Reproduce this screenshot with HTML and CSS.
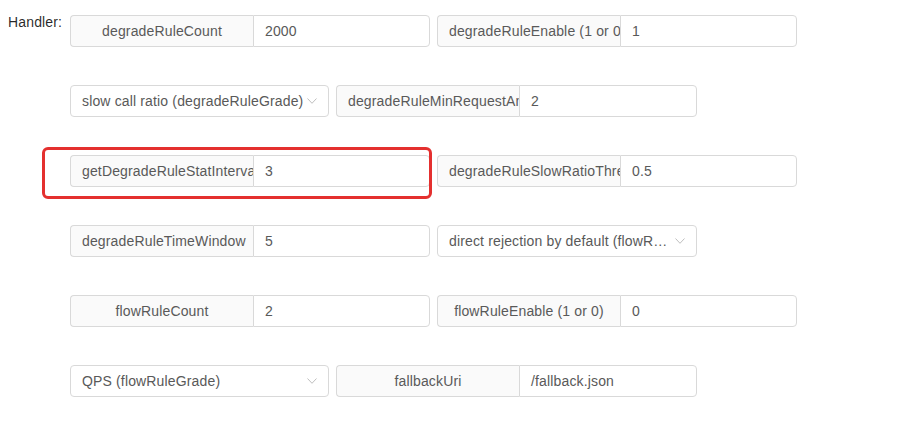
FILE: index.html
```html
<!DOCTYPE html>
<html>
<head>
<meta charset="utf-8">
<link rel="stylesheet" href="styles.css">
</head>
<body>
<div class="form">
  <div class="label">Handler:</div>
  <div class="rows">
    <div class="row">
      <div class="group"><div class="addon">degradeRuleCount</div><div class="input">2000</div></div>
      <div class="group"><div class="addon">degradeRuleEnable (1 or 0)</div><div class="input">1</div></div>
    </div>
    <div class="row">
      <div class="select"><span class="sel-text">slow call ratio (degradeRuleGrade)</span><svg class="arrow" width="10" height="6" viewBox="0 0 10 6"><polyline points="0.5,0.5 5,5.3 9.5,0.5" fill="none" stroke="#bfbfbf" stroke-width="1"/></svg></div>
      <div class="group wide"><div class="addon">degradeRuleMinRequestAmount</div><div class="input">2</div></div>
    </div>
    <div class="row">
      <div class="group"><div class="addon">getDegradeRuleStatIntervals</div><div class="input">3</div></div>
      <div class="group"><div class="addon">degradeRuleSlowRatioThreshold</div><div class="input">0.5</div></div>
    </div>
    <div class="row">
      <div class="group"><div class="addon">degradeRuleTimeWindow</div><div class="input">5</div></div>
      <div class="select sel-b"><span class="sel-text">direct rejection by default (flowRuleControlBehavior)</span><svg class="arrow" width="10" height="6" viewBox="0 0 10 6"><polyline points="0.5,0.5 5,5.3 9.5,0.5" fill="none" stroke="#bfbfbf" stroke-width="1"/></svg></div>
    </div>
    <div class="row">
      <div class="group"><div class="addon">flowRuleCount</div><div class="input">2</div></div>
      <div class="group"><div class="addon">flowRuleEnable (1 or 0)</div><div class="input">0</div></div>
    </div>
    <div class="row">
      <div class="select"><span class="sel-text">QPS (flowRuleGrade)</span><svg class="arrow" width="10" height="6" viewBox="0 0 10 6"><polyline points="0.5,0.5 5,5.3 9.5,0.5" fill="none" stroke="#bfbfbf" stroke-width="1"/></svg></div>
      <div class="group wide"><div class="addon">fallbackUri</div><div class="input">/fallback.json</div></div>
    </div>
  </div>
</div>
<div class="highlight"></div>
</body>
</html>
```
FILE: styles.css
```css
html, body {
  margin: 0;
  background: #fff;
}
body {
  font-family: "Liberation Sans", Arial, sans-serif;
  font-size: 14px;
  letter-spacing: 0.15px;
  color: #595959;
  position: relative;
  height: 423px;
  overflow: hidden;
}
.form {
  display: flex;
  padding-top: 15px;
}
.label {
  width: 62px;
  padding-left: 8px;
  margin-top: -4px;
  line-height: 22px;
  height: 22px;
  color: rgba(0, 0, 0, 0.85);
}
.rows {
  display: flex;
  flex-direction: column;
  gap: 38px;
}
.row {
  display: flex;
  gap: 7px;
  height: 32px;
}
.group {
  display: flex;
  width: 360px;
  height: 32px;
}
.group.wide {
  width: 361px;
}
.addon {
  box-sizing: border-box;
  width: 183px;
  flex: none;
  background: #fafafa;
  border: 1px solid #d9d9d9;
  border-right: 0;
  border-radius: 4px 0 0 4px;
  padding: 0 11px;
  line-height: 30px;
  text-align: center;
  white-space: nowrap;
  overflow: hidden;
}
.input {
  box-sizing: border-box;
  flex: 1;
  border: 1px solid #d9d9d9;
  border-radius: 0 4px 4px 0;
  padding: 0 11px;
  line-height: 30px;
  white-space: nowrap;
  overflow: hidden;
}
.select {
  box-sizing: border-box;
  width: 259px;
  height: 32px;
  border: 1px solid #d9d9d9;
  border-radius: 4px;
  display: flex;
  align-items: center;
  padding: 0 11px 0 11px;
  gap: 1px;
}
.select.sel-b {
  width: 260px;
}
.sel-text {
  flex: 1;
  min-width: 0;
  white-space: nowrap;
  overflow: hidden;
  text-overflow: ellipsis;
  line-height: 30px;
}
.arrow {
  flex: none;
  display: block;
}
.highlight {
  position: absolute;
  left: 42px;
  top: 147px;
  width: 384px;
  height: 46px;
  border: 3px solid #e4302f;
  border-radius: 6px;
}
```
